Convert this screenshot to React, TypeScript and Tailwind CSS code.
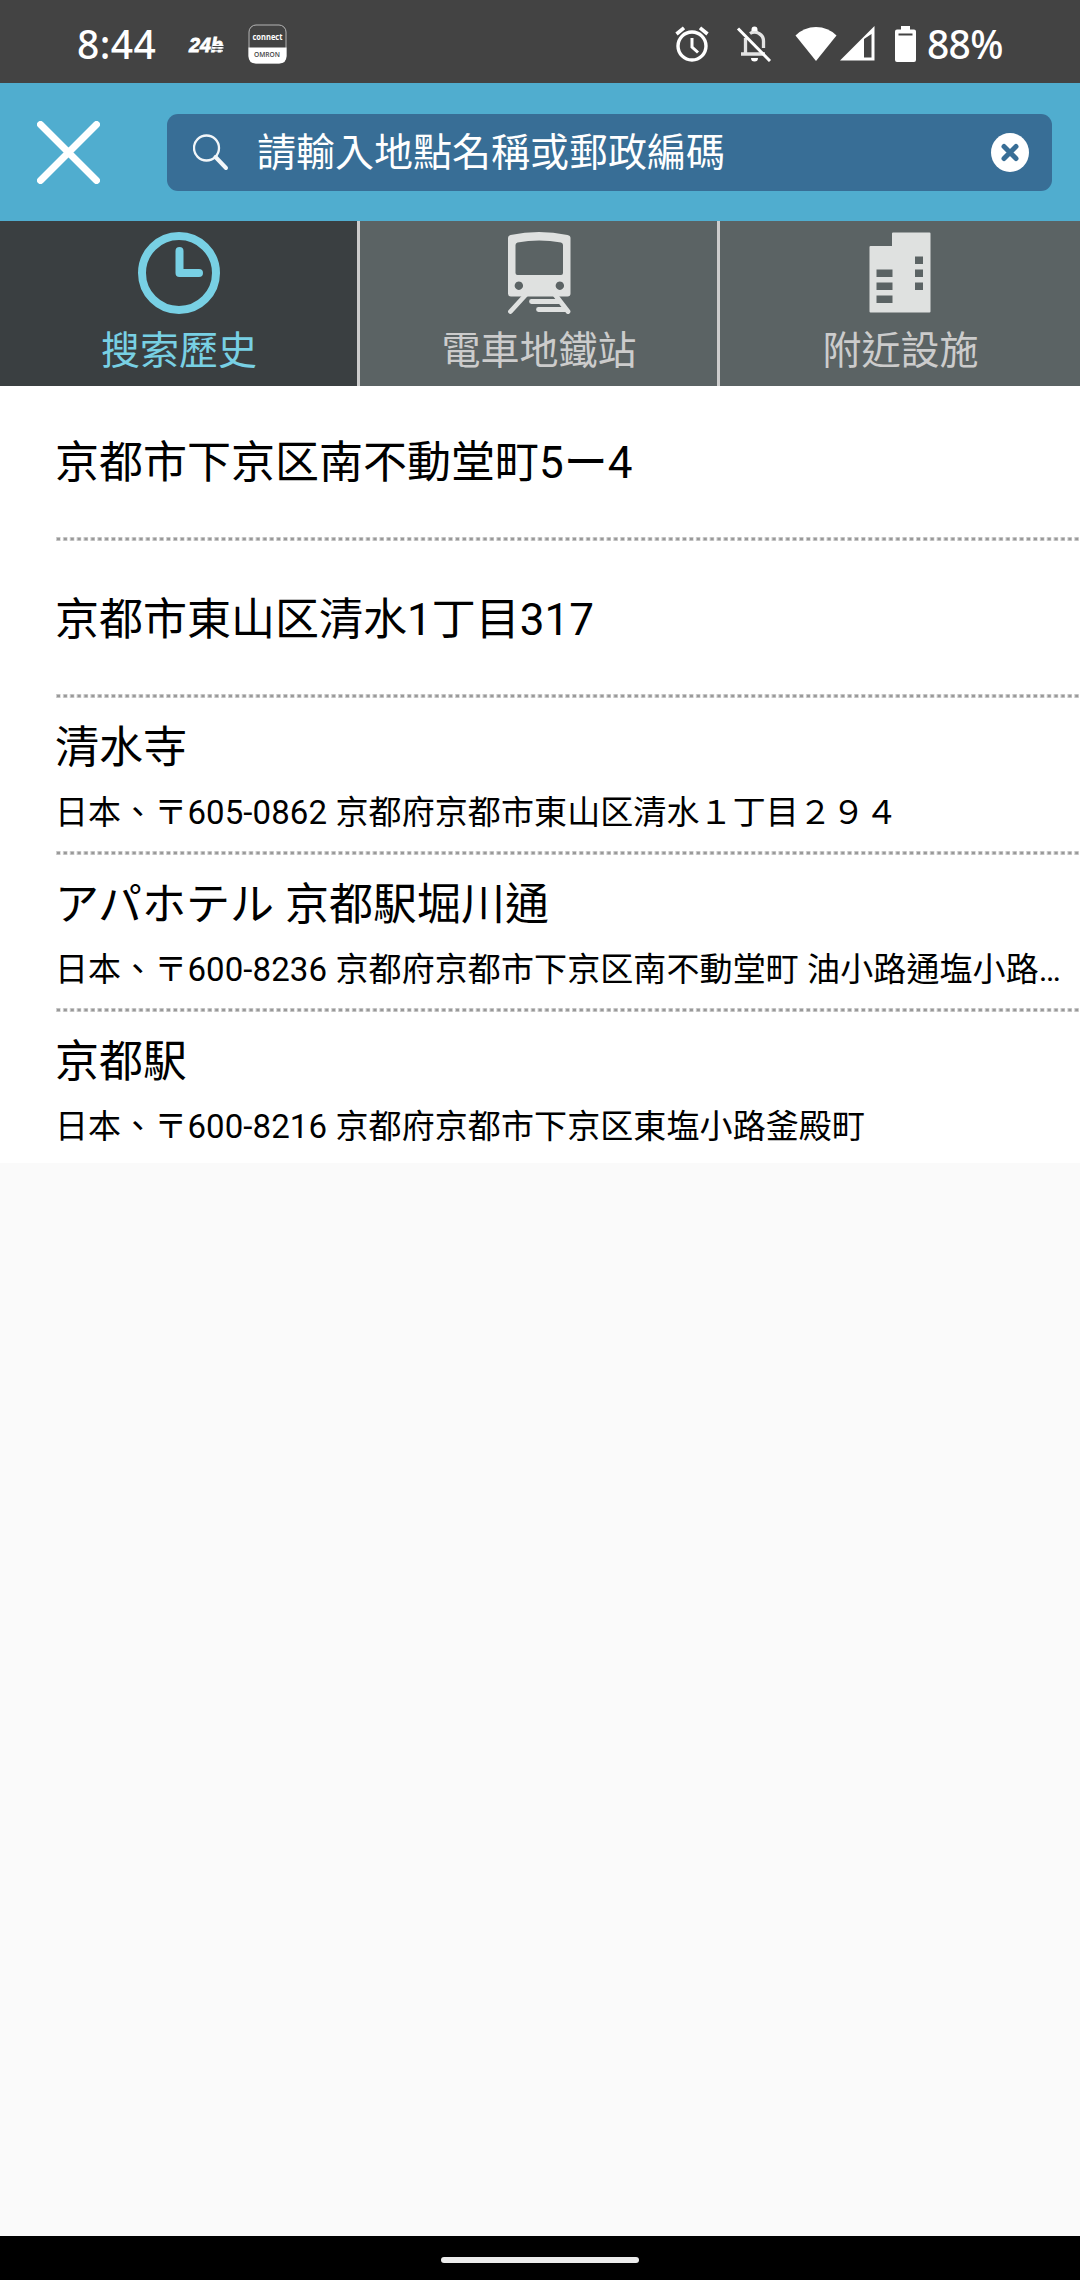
import React, { useState } from 'react';

type TabId = 'history' | 'station' | 'nearby';

interface Place {
  name: string;
  address?: string;
}

const places: Place[] = [
  { name: '京都市下京区南不動堂町5ー4' },
  { name: '京都市東山区清水1丁目317' },
  { name: '清水寺', address: '日本、〒605-0862 京都府京都市東山区清水１丁目２９４' },
  {
    name: 'アパホテル 京都駅堀川通',
    address: '日本、〒600-8236 京都府京都市下京区南不動堂町 油小路通塩小路…',
  },
  { name: '京都駅', address: '日本、〒600-8216 京都府京都市下京区東塩小路釜殿町' },
];

const ClockIcon = () => (
  <svg width="82" height="82" viewBox="0 0 82 82" fill="none" stroke="currentColor" strokeWidth="8">
    <circle cx="41" cy="41" r="37" />
    <path d="M41.500 19v22H61" strokeLinecap="round" strokeLinejoin="round" />
  </svg>
);

const TrainIcon = () => (
  <svg width="82" height="82" viewBox="0 0 82 82" fill="none">
    <path
      fill="currentColor"
      fillRule="evenodd"
      d="M10 6Q10 3.500 12.500 3Q41-3 69.500 3Q72.500 3.500 72.500 6V61.500Q72.500 64.500 69.500 64.500H13Q10 64.500 10 61.500ZM17.500 13V41Q17.500 43 19.500 43H63Q65 43 65 41V13Q65 11 63 10.500Q41 6.500 19.500 10.500Q17.500 11 17.500 13ZM20.800 49.500a4.200 4.200 0 1 0 .1 0ZM61.800 49.500a4.200 4.200 0 1 0 .1 0Z"
    />
    <path
      d="M28.500 62L12.500 79.500M56.500 62L70 79.500M33.500 69.500H62M40.500 77.500H68"
      stroke="currentColor"
      strokeWidth="4.800"
      strokeLinecap="round"
    />
  </svg>
);

const BuildingIcon = () => (
  <svg width="82" height="82" viewBox="0 0 82 82" fill="currentColor">
    <path
      fillRule="evenodd"
      d="M34 .5H70.500Q71.500.5 71.500 1.500V79.500Q71.500 80.500 70.500 80.500H11.500Q10.500 80.500 10.500 79.500V15Q10.500 14 11.500 14H33V1.500Q33 .5 34 .5ZM17.500 37.500V45H33.500V37.500ZM17.500 50.500V58H33.500V50.500ZM17.500 63.500V71H33.500V63.500ZM56 24.500V32H64V24.500ZM56 37.500V45H64V37.500ZM56 50.500V58H64V50.500Z"
    />
  </svg>
);

const tabs: { id: TabId; label: string; icon: React.ReactNode }[] = [
  { id: 'history', label: '搜索歷史', icon: <ClockIcon /> },
  { id: 'station', label: '電車地鐵站', icon: <TrainIcon /> },
  { id: 'nearby', label: '附近設施', icon: <BuildingIcon /> },
];

const StatusBar = () => (
  <div className="flex h-[83px] shrink-0 items-center bg-[#434343] px-[77px] pt-1 text-white">
    <span className="w-[79px] whitespace-nowrap font-['Noto_Sans',sans-serif] text-[39px] font-medium leading-none tracking-[0.4px]">
      8:44
    </span>
    <svg className="ml-8 overflow-visible" width="37" height="16" viewBox="0 0 37 16">
      <text
        x="1"
        y="15.500"
        fill="#fff"
        stroke="#fff"
        strokeWidth=".8"
        textLength="34"
        lengthAdjust="spacingAndGlyphs"
        className="font-['Liberation_Sans'] text-[21px] font-bold italic"
      >
        24h
      </text>
      <path d="M24.500 10.500H36M24 13.200H36" stroke="#434343" strokeWidth="1" />
      <path d="M25.500 9.300H35.500M24.500 11.900H35.500M24 14.800H35" stroke="#fff" strokeWidth="1.200" />
    </svg>
    <svg className="ml-[23px] overflow-visible" width="39" height="40" viewBox="0 0 39 40">
      <rect x="1" y="1" width="37" height="38" rx="7" fill="none" stroke="#b5b5b5" />
      <path d="M.5 23.500h38V32q0 7.500-7.500 7.500H8Q.5 39.500.5 32Z" fill="#fff" />
      <text
        x="4.500"
        y="15.500"
        fill="#fff"
        textLength="30"
        lengthAdjust="spacingAndGlyphs"
        className="font-['Open_Sans'] text-[9px] font-bold"
      >
        connect
      </text>
      <text
        x="6"
        y="32.500"
        fill="#434343"
        textLength="26"
        lengthAdjust="spacingAndGlyphs"
        className="font-['Open_Sans'] text-[7.5px] font-semibold"
      >
        OMRON
      </text>
    </svg>

    <div className="ml-auto flex items-center">
      {/* Alarm */}
      <svg width="34" height="36" viewBox="0 0 34 36" fill="none" stroke="#fff">
        <circle cx="17" cy="20" r="14" strokeWidth="3.400" />
        <path d="M17 12v9l6 5.500" strokeWidth="3" />
        <path d="M1.500 8L9 1.800M32.500 8L25 1.800" strokeWidth="3.600" />
      </svg>
      {/* Notifications off */}
      <svg className="ml-[27px]" width="36" height="36" viewBox="0 0 36 36" fill="none" stroke="#e4e4e4">
        <path d="M9.500 12V28M5 28H29M14 7.500Q18.500 4.500 23 7.500Q27.500 10 27.500 15V22" strokeWidth="3.300" />
        <path d="M15.500 5V3.500a3 3 0 0 1 6 0V5ZM15 32h7a3.500 3.500 0 0 1-7 0Z" fill="#fff" stroke="none" />
        <path d="M2 2.500L34 35" stroke="#fff" strokeWidth="3" />
      </svg>
      {/* Wifi */}
      <svg className="ml-[23px]" width="42" height="34" viewBox="0 0 42 34" fill="#fff">
        <path d="M.5 8.500Q9 0 21 0T41.500 8.500L21 34Z" />
      </svg>
      {/* Signal */}
      <svg className="ml-[3px]" width="35" height="35" viewBox="0 0 35 35">
        <path d="M0 34.500L34.500 0V34.500ZM24 13V31.500H31.500V8Z" fill="#fff" fillRule="evenodd" />
      </svg>
      {/* Battery */}
      <svg className="ml-5" width="21" height="36" viewBox="0 0 21 36">
        <path
          d="M6 0H15V3.500H19Q21 3.500 21 5.500V34Q21 36 19 36H2Q0 36 0 34V5.500Q0 3.500 2 3.500H6ZM3.500 7.500V9.500H17.500V7.500Z"
          fill="#fff"
          fillRule="evenodd"
        />
      </svg>
      <span className="ml-[11px] w-[76px] whitespace-nowrap font-['Noto_Sans',sans-serif] text-[39px] font-medium leading-none tracking-[-0.7px]">
        88%
      </span>
    </div>
  </div>
);

const Divider = () => (
  <div className="ml-14 flex h-2 items-center">
    <svg className="h-1 w-full" fill="none">
      <line x1="0" y1="2" x2="1024" y2="2" stroke="#d0d0d0" strokeWidth="4" strokeDasharray="4.6 2.280" />
      <line x1="1" y1="2" x2="1024" y2="2" stroke="#999" strokeWidth="2.600" strokeDasharray="3 3.880" />
    </svg>
  </div>
);

export default function App() {
  const [activeTab, setActiveTab] = useState<TabId>('history');
  const [query, setQuery] = useState('');

  return (
    <div className="flex h-[2280px] w-[1080px] flex-col overflow-hidden bg-[#fafafa] font-['Roboto','Noto_Sans_CJK_TC',sans-serif]">
      <StatusBar />

      {/* Search header */}
      <header className="flex h-[138px] shrink-0 items-center bg-[#50adcf] pl-[37px] pr-7">
        <button aria-label="關閉">
          <svg width="63" height="63" viewBox="0 0 63 63" stroke="#fff" strokeWidth="7" strokeLinecap="round">
            <path d="M3.500 3.500L59.500 59.500M59.500 3.500L3.500 59.500" />
          </svg>
        </button>
        <div className="ml-[67px] flex h-[77px] flex-1 items-center rounded-[11px] bg-[#386e96] pl-[26px] pr-[23px]">
          <svg width="36" height="37" viewBox="0 0 36 37" fill="none" stroke="#f2f6f9">
            <circle cx="13.500" cy="14" r="12.500" strokeWidth="2.300" />
            <path d="M22.500 23L33 34" strokeWidth="4" strokeLinecap="round" />
          </svg>
          <input
            className="ml-7 min-w-0 flex-1 bg-transparent pt-0.5 text-[39px] text-white outline-none placeholder:text-white"
            placeholder="請輸入地點名稱或郵政編碼"
            value={query}
            onChange={(e) => setQuery(e.target.value)}
          />
          <button aria-label="清除" onClick={() => setQuery('')}>
            <svg width="38" height="39" viewBox="0 0 38 39">
              <ellipse cx="19" cy="19.500" rx="19" ry="19.500" fill="#fff" />
              <path d="M13 13.500L25 25.500M25 13.500L13 25.500" stroke="#386e96" strokeWidth="5" strokeLinecap="round" />
            </svg>
          </button>
        </div>
      </header>

      {/* Tabs */}
      <nav className="grid h-[165px] shrink-0 grid-cols-[357px_357px_1fr] gap-x-[3px] bg-[#cccccc]">
        {tabs.map((tab) => {
          const active = tab.id === activeTab;
          return (
            <button
              key={tab.id}
              onClick={() => setActiveTab(tab.id)}
              className={`flex flex-col items-center pt-[11px] ${
                active ? 'bg-[#3a3f41] text-[#78d0e4]' : 'bg-[#5b6364] text-[#dfe1e0]'
              }`}
            >
              {tab.icon}
              <span className={`mt-2 pl-px text-[39px] leading-[58px] ${active ? '' : 'text-[#cccccc]'}`}>
                {tab.label}
              </span>
            </button>
          );
        })}
      </nav>

      {/* Search history */}
      <ul className="shrink-0 bg-white text-black">
        {places.map((place, i) => (
          <li key={place.name}>
            {place.address ? (
              <div className="flex h-[149px] flex-col pl-[55px] pt-4">
                <p className="whitespace-nowrap text-[44px] leading-[65px]">{place.name}</p>
                <p className="whitespace-nowrap text-[33px] leading-[63px] tracking-[0.1px]">{place.address}</p>
              </div>
            ) : (
              <div className="flex h-[149px] items-center pl-[55px] pt-1.5">
                <p className="whitespace-nowrap text-[44px] leading-[65px]">{place.name}</p>
              </div>
            )}
            {i < places.length - 1 && <Divider />}
          </li>
        ))}
      </ul>

      {/* Gesture bar */}
      <div className="mt-auto flex h-11 shrink-0 items-center justify-center bg-black pb-1 pt-2">
        <div className="h-1.5 w-[198px] rounded-full bg-[#ececec]" />
      </div>
    </div>
  );
}
